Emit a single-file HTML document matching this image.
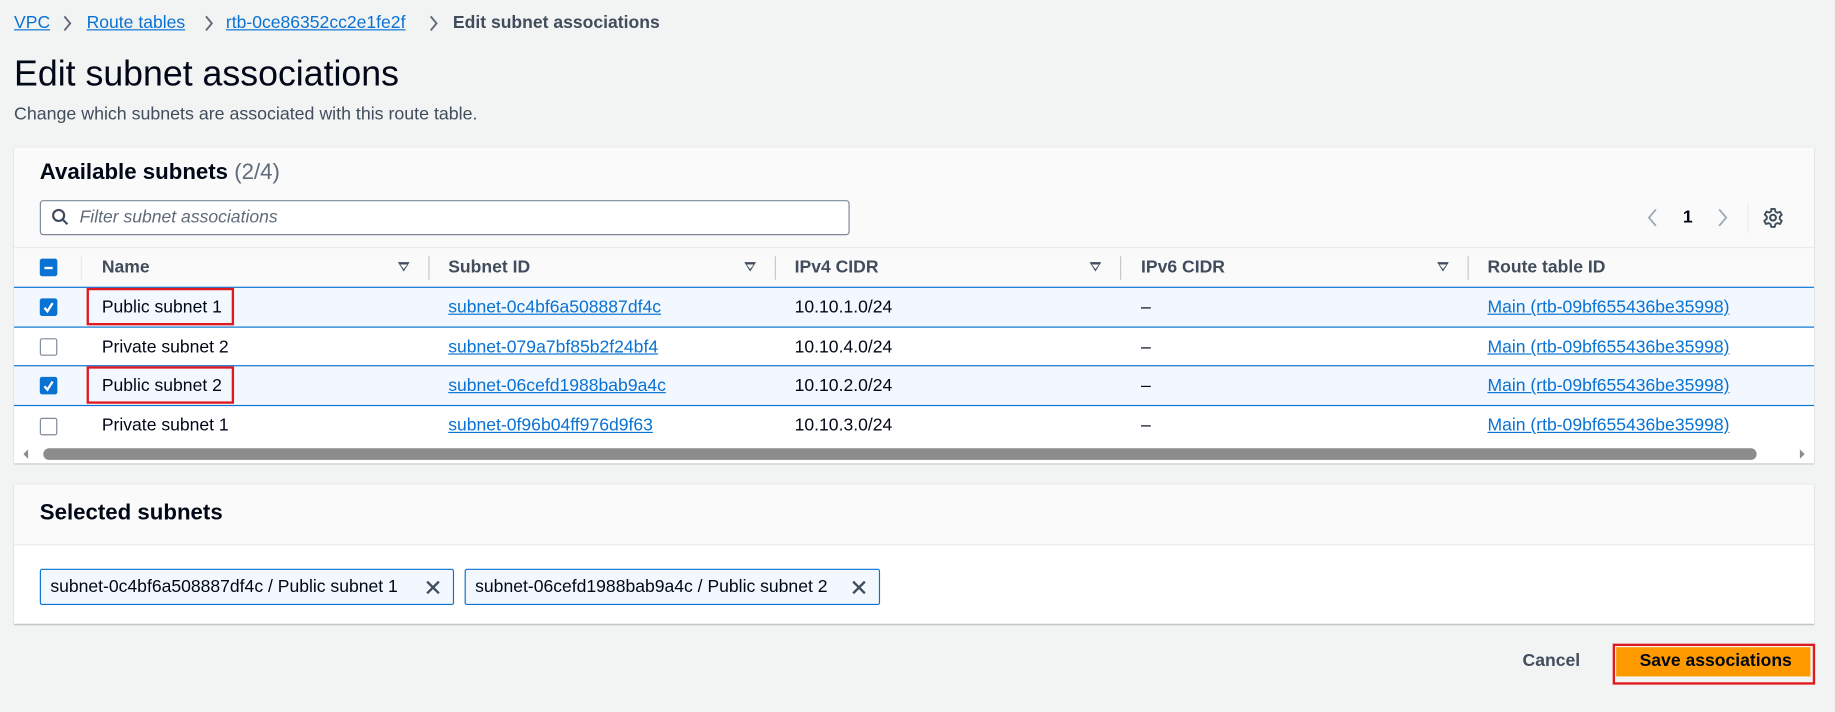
<!DOCTYPE html>
<html><head><meta charset="utf-8"><style>
html,body{margin:0;padding:0;width:1835px;height:711px;overflow:hidden;background:#f2f3f3;}
#w{position:absolute;left:0;top:0;width:1568px;height:608px;transform:scale(1.1703);transform-origin:0 0;font-family:"Liberation Sans",sans-serif;color:#000716;font-size:15px;}
.a{position:absolute;white-space:nowrap;}
a,.lk{color:#0972d3;text-decoration:underline;}
.bc{top:11px;font-size:15px;}
.sep{position:absolute;top:13px;}
.panel{position:absolute;left:12px;width:1538px;background:#fff;box-shadow:0 1px 1px rgba(0,0,0,.25);border-top:1px solid #e9ebed;}
.cb{position:absolute;width:13px;height:13px;border:1.5px solid #7d8998;border-radius:2px;background:#fff;}
.cb.on{background:#0972d3;border-color:#0972d3;}
.row{position:absolute;left:0;width:1538px;height:33px;}
.row.sel{background:#f2f8fd;border-top:1px solid #0972d3;border-bottom:1px solid #0972d3;}
.th{position:absolute;top:14px;font-weight:bold;color:#414d5c;}
.dv{position:absolute;top:8px;width:1px;height:20px;background:#c6c6cd;}
.tri{position:absolute;top:13px;width:0;height:0;border-left:5px solid transparent;border-right:5px solid transparent;border-top:8px solid #414d5c;}
.tri:after{content:"";position:absolute;left:-3px;top:-6.5px;border-left:3px solid transparent;border-right:3px solid transparent;border-top:4.5px solid #fafafa;}
.red{position:absolute;border:2px solid #e0191f;}
.tok{position:absolute;top:72px;height:29px;border:1px solid #0972d3;border-radius:2px;background:#f2f8fd;}
</style></head><body><div id="w">
<div class="a bc" style="left:12px"><span class="lk">VPC</span></div>
<svg class="sep" style="left:53px" width="9" height="14"><path d="M2 1l5 6-5 6" fill="none" stroke="#5f6b7a" stroke-width="1.6"/></svg>
<div class="a bc" style="left:74px"><span class="lk">Route tables</span></div>
<svg class="sep" style="left:174px" width="9" height="14"><path d="M2 1l5 6-5 6" fill="none" stroke="#5f6b7a" stroke-width="1.6"/></svg>
<div class="a bc" style="left:193px"><span class="lk">rtb-0ce86352cc2e1fe2f</span></div>
<svg class="sep" style="left:366px" width="9" height="14"><path d="M2 1l5 6-5 6" fill="none" stroke="#5f6b7a" stroke-width="1.6"/></svg>
<div class="a bc" style="left:387px;font-weight:bold;color:#414d5c">Edit subnet associations</div>
<div class="a" style="left:12px;top:46px;font-size:30.5px;">Edit subnet associations</div>
<div class="a" style="left:12px;top:89px;font-size:15.2px;color:#414d5c">Change which subnets are associated with this route table.</div>

<div class="panel" style="top:125px;height:270px;">
 <div style="position:absolute;left:0;top:0;width:1538px;height:85px;background:#fafafa"></div>
 <div class="a" style="left:22px;top:11px;font-size:19px;font-weight:bold">Available subnets <span style="font-weight:normal;color:#5f6b7a">(2/4)</span></div>
 <div style="position:absolute;left:22px;top:45px;width:690px;height:28px;border:1px solid #7d8998;border-radius:3px;background:#fff"></div>
 <svg class="a" style="left:32px;top:52px" width="15" height="15" viewBox="0 0 16 16"><circle cx="6.5" cy="6.5" r="5" fill="none" stroke="#414d5c" stroke-width="2"/><path d="M10 10l4.5 4.5" stroke="#414d5c" stroke-width="2"/></svg>
 <div class="a" style="left:56px;top:51px;font-style:italic;color:#5f6b7a">Filter subnet associations</div>
 <svg class="a" style="left:1394px;top:51px" width="12" height="18"><path d="M9 2L3 9l6 7" fill="none" stroke="#9ba7b6" stroke-width="1.5"/></svg>
 <div class="a" style="left:1426px;top:51px;font-weight:bold">1</div>
 <svg class="a" style="left:1454px;top:51px" width="12" height="18"><path d="M3 2l6 7-6 7" fill="none" stroke="#9ba7b6" stroke-width="1.5"/></svg>
 <div style="position:absolute;left:1481px;top:47px;width:1px;height:26px;background:#e9ebed"></div>
 <svg class="a" style="left:1494px;top:51px" width="18" height="18" viewBox="0 0 18 18"><circle cx="9" cy="9" r="2.5" fill="none" stroke="#414d5c" stroke-width="1.8"/><path d="M7.5 1.5h3l.5 2.3 1.8 1 2.2-.8 1.5 2.6-1.7 1.6v2l1.7 1.6-1.5 2.6-2.2-.8-1.8 1-.5 2.3h-3l-.5-2.3-1.8-1-2.2.8-1.5-2.6L3.7 10V8L2 6.4l1.5-2.6 2.2.8 1.8-1z" fill="none" stroke="#414d5c" stroke-width="1.6" stroke-linejoin="round"/></svg>
 <div style="position:absolute;left:0;top:85px;width:1538px;height:35px;background:#fafafa;border-top:1px solid #e9ebed"></div>
 <div style="position:absolute;left:0;top:85px;width:1538px;height:35px;">
  <div class="cb on" style="left:22px;top:10px"><div style="position:absolute;left:3px;top:5.5px;width:7px;height:2px;background:#fff"></div></div>
  <div class="dv" style="left:57px;background:#e9ebed"></div>
  <div class="th" style="left:75px;top:9px">Name</div><div class="tri" style="left:328px"></div><div class="dv" style="left:354px"></div>
  <div class="th" style="left:371px;top:9px">Subnet ID</div><div class="tri" style="left:624px"></div><div class="dv" style="left:650px"></div>
  <div class="th" style="left:667px;top:9px">IPv4 CIDR</div><div class="tri" style="left:919px"></div><div class="dv" style="left:945px"></div>
  <div class="th" style="left:963px;top:9px">IPv6 CIDR</div><div class="tri" style="left:1216px"></div><div class="dv" style="left:1242px"></div>
  <div class="th" style="left:1259px;top:9px">Route table ID</div>
 </div>
 <div class="row sel" style="top:119px"><div class="cb on" style="left:22px;top:9px"><svg style="position:absolute;left:1px;top:1px" width="11" height="11"><path d="M2 6l2.5 3L9 2" fill="none" stroke="#fff" stroke-width="2"/></svg></div>
  <div class="a" style="left:75px;top:8px">Public subnet 1</div><div class="a lk" style="left:371px;top:8px">subnet-0c4bf6a508887df4c</div><div class="a" style="left:667px;top:8px">10.10.1.0/24</div><div class="a" style="left:963px;top:8px">–</div><div class="a lk" style="left:1259px;top:8px">Main (rtb-09bf655436be35998)</div></div>
 <div class="row" style="top:153px"><div class="cb" style="left:22px;top:10px"></div>
  <div class="a" style="left:75px;top:9px">Private subnet 2</div><div class="a lk" style="left:371px;top:9px">subnet-079a7bf85b2f24bf4</div><div class="a" style="left:667px;top:9px">10.10.4.0/24</div><div class="a" style="left:963px;top:9px">–</div><div class="a lk" style="left:1259px;top:9px">Main (rtb-09bf655436be35998)</div></div>
 <div class="row sel" style="top:186px"><div class="cb on" style="left:22px;top:9px"><svg style="position:absolute;left:1px;top:1px" width="11" height="11"><path d="M2 6l2.5 3L9 2" fill="none" stroke="#fff" stroke-width="2"/></svg></div>
  <div class="a" style="left:75px;top:8px">Public subnet 2</div><div class="a lk" style="left:371px;top:8px">subnet-06cefd1988bab9a4c</div><div class="a" style="left:667px;top:8px">10.10.2.0/24</div><div class="a" style="left:963px;top:8px">–</div><div class="a lk" style="left:1259px;top:8px">Main (rtb-09bf655436be35998)</div></div>
 <div class="row" style="top:221px"><div class="cb" style="left:22px;top:10px"></div>
  <div class="a" style="left:75px;top:8px">Private subnet 1</div><div class="a lk" style="left:371px;top:8px">subnet-0f96b04ff976d9f63</div><div class="a" style="left:667px;top:8px">10.10.3.0/24</div><div class="a" style="left:963px;top:8px">–</div><div class="a lk" style="left:1259px;top:8px">Main (rtb-09bf655436be35998)</div></div>
 <div class="red" style="left:62px;top:120px;width:122px;height:28px"></div>
 <div class="red" style="left:62px;top:187px;width:122px;height:28px"></div>
 <div style="position:absolute;left:8px;top:258px;width:0;height:0;border-top:4px solid transparent;border-bottom:4px solid transparent;border-right:4px solid #8c8c8c"></div>
 <div style="position:absolute;left:25px;top:257px;width:1464px;height:10px;border-radius:5px;background:#8c8c8c"></div>
 <div style="position:absolute;left:1526px;top:258px;width:0;height:0;border-top:4px solid transparent;border-bottom:4px solid transparent;border-left:4px solid #8c8c8c"></div>
</div>

<div class="panel" style="top:413px;height:119px;">
 <div style="position:absolute;left:0;top:0;width:1538px;height:51px;background:#fafafa;border-bottom:1px solid #e9ebed"></div>
 <div class="a" style="left:22px;top:14px;font-size:19px;font-weight:bold">Selected subnets</div>
 <div class="tok" style="left:22px;width:352px"><div class="a" style="left:8px;top:6px">subnet-0c4bf6a508887df4c / Public subnet 1</div><svg class="a" style="left:328px;top:8px" width="14" height="14"><path d="M2 2l10 10M12 2L2 12" stroke="#414d5c" stroke-width="2"/></svg></div>
 <div class="tok" style="left:385px;width:353px"><div class="a" style="left:8px;top:6px">subnet-06cefd1988bab9a4c / Public subnet 2</div><svg class="a" style="left:329px;top:8px" width="14" height="14"><path d="M2 2l10 10M12 2L2 12" stroke="#414d5c" stroke-width="2"/></svg></div>
</div>

<div class="a" style="left:1301px;top:556px;font-weight:bold;color:#414d5c">Cancel</div>
<div style="position:absolute;left:1378px;top:550px;width:169px;height:31px;border:2px solid #e0191f;"></div>
<div style="position:absolute;left:1381px;top:553px;width:166px;height:25px;background:#ff9900;"></div>
<div class="a" style="left:1401px;top:556px;font-weight:bold;color:#000716">Save associations</div>
</div></body></html>
